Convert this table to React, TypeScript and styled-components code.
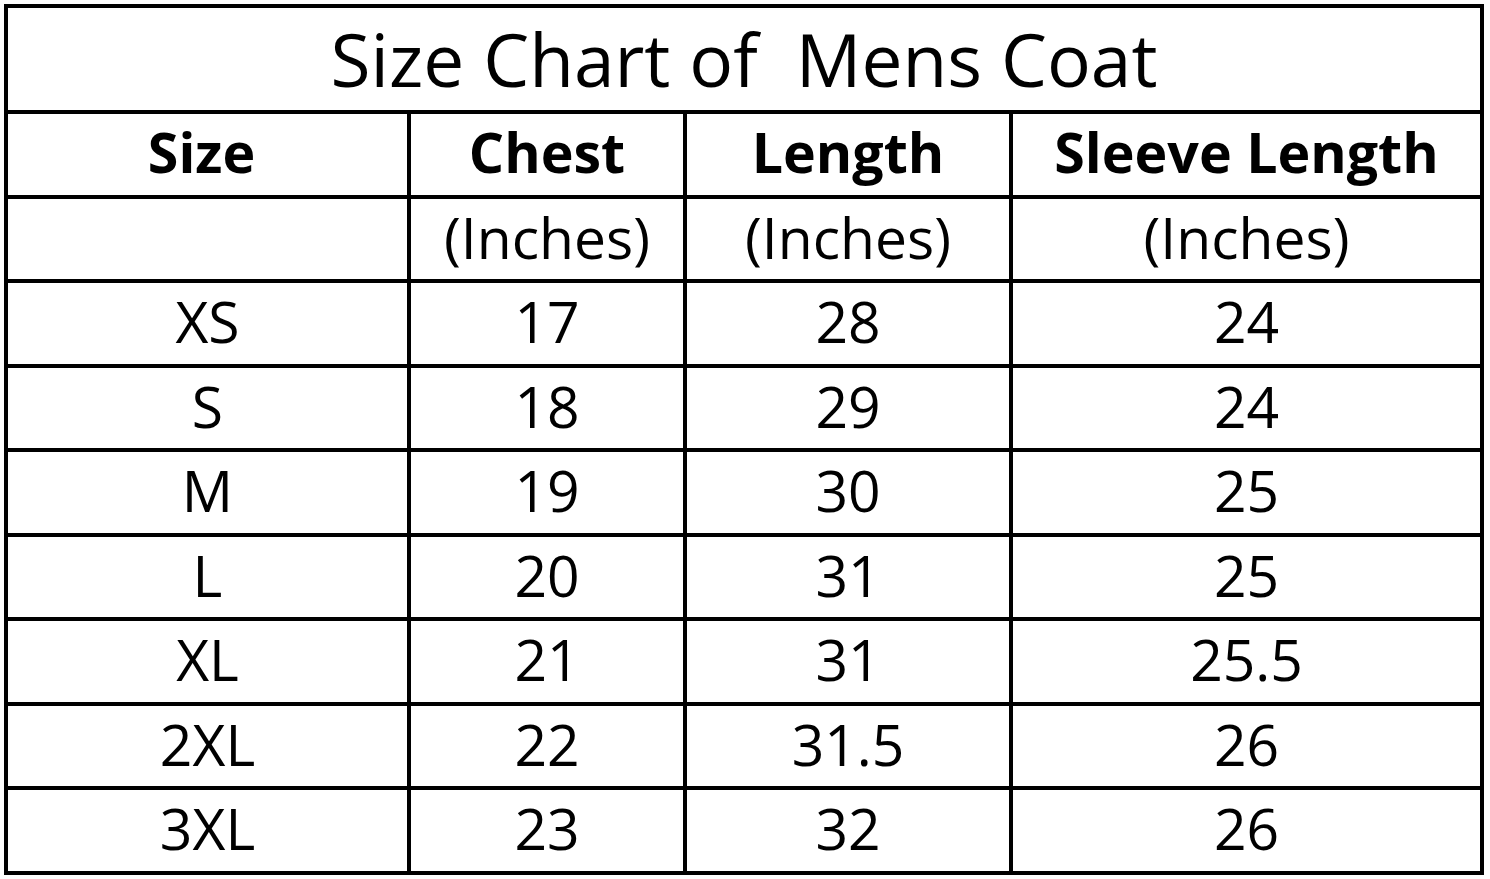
import React from "react";
import styled, { createGlobalStyle } from "styled-components";

const GlobalStyle = createGlobalStyle`
  html, body {
    margin: 0;
    padding: 0;
    background: #ffffff;
  }
  body {
    font-family: "Open Sans", "Noto Sans", sans-serif;
    color: #000;
  }
`;

const Page = styled.div`
  padding: 4px 0 0 4px;
  width: 1490px;
  height: 879px;
  box-sizing: border-box;
  background: #fff;
`;

const Chart = styled.div`
  display: grid;
  width: 1480px;
  box-sizing: border-box;
  grid-template-columns: 399px 272px 322px 467px;
  grid-template-rows: 102px repeat(9, 80.5px);
  gap: 4px;
  padding: 4px;
  background: #000;
`;

const Cell = styled.div<{ $bold?: boolean; $shift?: number }>`
  background: #fff;
  display: flex;
  align-items: center;
  justify-content: center;
  box-sizing: border-box;
  padding-bottom: ${(p) => (p.$bold ? "5px" : "3px")};
  padding-right: ${(p) => (p.$shift ? `${p.$shift}px` : "0")};
  font-family: "Open Sans", "Noto Sans", sans-serif;
  font-size: ${(p) => (p.$bold ? "55.5px" : "57px")};
  font-weight: ${(p) => (p.$bold ? 700 : 400)};
  line-height: 1;
  white-space: pre;
  color: #000;
`;

const TitleCell = styled(Cell)`
  grid-column: 1 / -1;
  font-size: 73px;
  font-weight: 400;
  padding-bottom: 2px;
`;

const headers: { label: string; shift?: number }[] = [
  { label: "Size", shift: 12 },
  { label: "Chest" },
  { label: "Length" },
  { label: "Sleeve Length" },
];
const units = ["", "(Inches)", "(Inches)", "(Inches)"];
const rows: string[][] = [
  ["XS", "17", "28", "24"],
  ["S", "18", "29", "24"],
  ["M", "19", "30", "25"],
  ["L", "20", "31", "25"],
  ["XL", "21", "31", "25.5"],
  ["2XL", "22", "31.5", "26"],
  ["3XL", "23", "32", "26"],
];

export default function App() {
  return (
    <>
      <GlobalStyle />
      <Page>
        <Chart>
          <TitleCell>{"Size Chart of  Mens Coat"}</TitleCell>
          {headers.map((h) => (
            <Cell key={"h" + h.label} $bold $shift={h.shift}>
              {h.label}
            </Cell>
          ))}
          {units.map((u, i) => (
            <Cell key={"u" + i}>{u}</Cell>
          ))}
          {rows.map((r, ri) =>
            r.map((v, ci) => <Cell key={ri + "-" + ci}>{v}</Cell>)
          )}
        </Chart>
      </Page>
    </>
  );
}
